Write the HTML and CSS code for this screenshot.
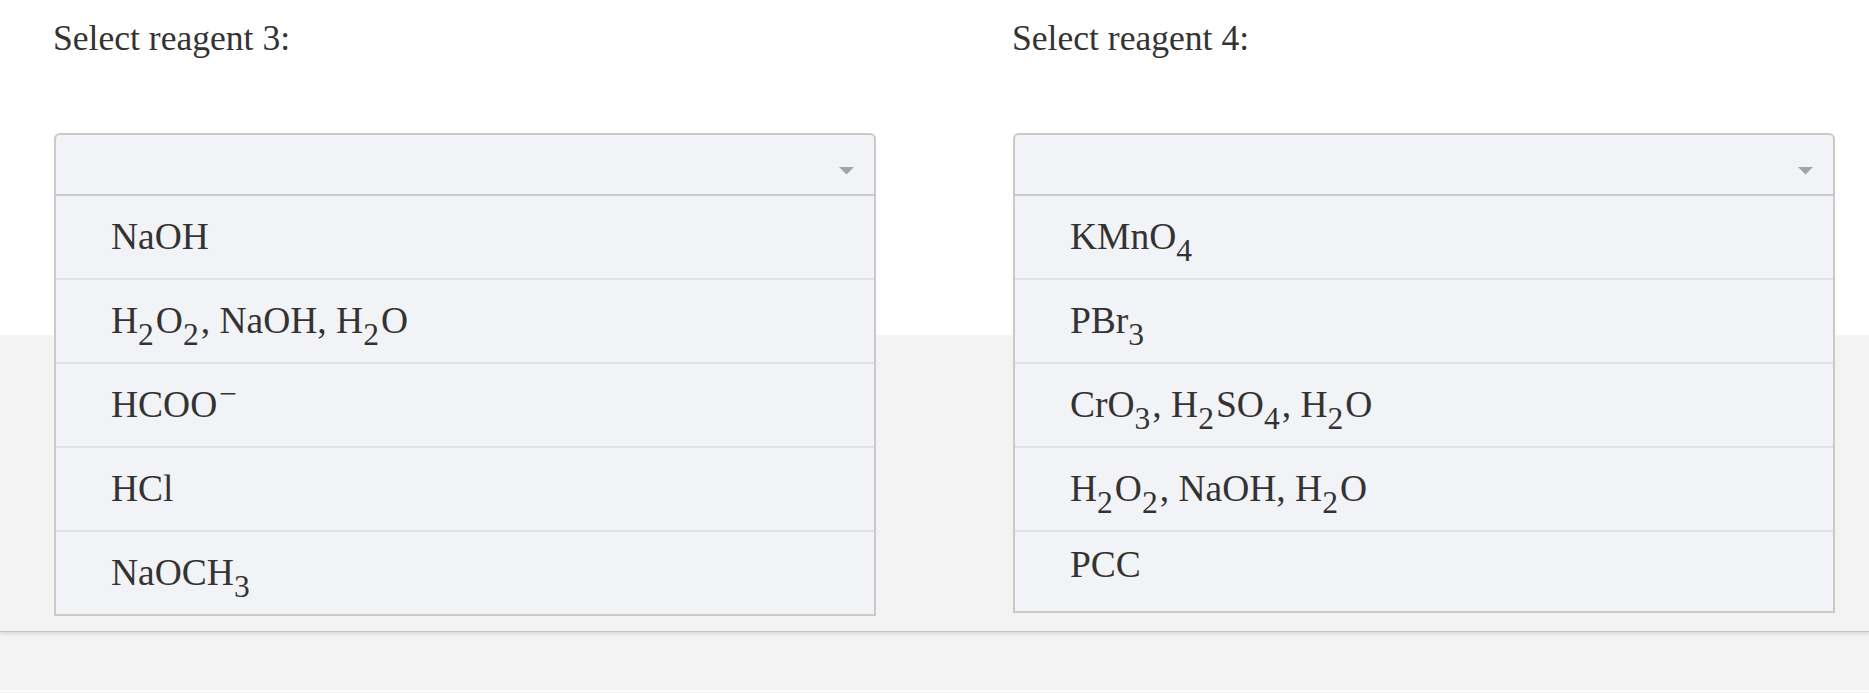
FILE: index.html
```html
<!DOCTYPE html>
<html lang="en">
<head>
<meta charset="utf-8">
<title>Select reagents</title>
<link rel="stylesheet" href="styles.css">
</head>
<body>
<div class="card">
  <div class="fields">
    <div class="field">
      <div class="label">Select reagent 3:</div>
      <div class="select">
        <div class="select-head">
          <svg class="caret" width="15" height="8" viewBox="0 0 15 8"><polygon points="0,0 15,0 7.5,7.5"/></svg>
        </div>
        <ul class="menu">
          <li class="opt">NaOH</li>
          <li class="opt">H<sub>2</sub>O<sub>2</sub>, NaOH, H<sub>2</sub>O</li>
          <li class="opt">HCOO<sup>−</sup></li>
          <li class="opt">HCl</li>
          <li class="opt">NaOCH<sub>3</sub></li>
        </ul>
      </div>
    </div>
    <div class="field">
      <div class="label">Select reagent 4:</div>
      <div class="select">
        <div class="select-head">
          <svg class="caret" width="15" height="8" viewBox="0 0 15 8"><polygon points="0,0 15,0 7.5,7.5"/></svg>
        </div>
        <ul class="menu">
          <li class="opt">KMnO<sub>4</sub></li>
          <li class="opt">PBr<sub>3</sub></li>
          <li class="opt">CrO<sub>3</sub>, H<sub>2</sub>SO<sub>4</sub>, H<sub>2</sub>O</li>
          <li class="opt">H<sub>2</sub>O<sub>2</sub>, NaOH, H<sub>2</sub>O</li>
          <li class="opt opt-short">PCC</li>
        </ul>
      </div>
    </div>
  </div>
</div>
<div class="gray-band"></div>
<div class="footer-band"></div>
<div class="edge"></div>
</body>
</html>
```

FILE: styles.css
```css
html, body {
  margin: 0;
  padding: 0;
}

body {
  background: #f3f3f3;
  font-family: "Liberation Serif", "Times New Roman", serif;
  color: #333333;
}

.card {
  background: #ffffff;
  height: 335px;
  box-sizing: border-box;
  padding: 18px 0 0 54px;
}

.fields {
  display: grid;
  grid-template-columns: 822px 822px;
  column-gap: 137px;
}

.field {
  display: flex;
  flex-direction: column;
}

.label {
  font-size: 35.6px;
  line-height: 40px;
  margin-left: -1px;
}

.select {
  position: relative;
  margin-top: 75px;
}

.select-head {
  height: 63px;
  box-sizing: border-box;
  background: #f2f3f7;
  border: 2px solid #c9c9c9;
  border-radius: 6px 6px 0 0;
  display: flex;
  justify-content: flex-end;
  align-items: flex-start;
  padding: 32px 20px 0 0;
}

.caret {
  display: block;
  fill: #a4a4a4;
}

.menu {
  position: absolute;
  top: 100%;
  left: 0;
  right: 0;
  z-index: 1;
  margin: 0;
  padding: 0;
  list-style: none;
  background: #f2f3f7;
  border: 2px solid #c9c9c9;
  border-top: 0;
}

.opt {
  height: 82px;
  box-sizing: border-box;
  padding: 22px 0 0 55px;
  font-size: 37.5px;
  line-height: 37.5px;
  white-space: nowrap;
}

.opt + .opt {
  border-top: 2px solid #e0e1e5;
  height: 84px;
}

.opt-short {
  padding-top: 14px;
}

.opt + .opt-short {
  height: 81px;
}

.opt sub {
  font-size: 0.84em;
  line-height: 0;
  vertical-align: -12px;
  margin-right: 2px;
}

.opt sup {
  font-size: 0.84em;
  line-height: 0;
  vertical-align: 13px;
  margin-left: 2px;
}

.gray-band {
  height: 296px;
  border-bottom: 1px solid #c4c4c4;
  box-shadow: 0 2px 3px rgba(0, 0, 0, 0.10);
}

.footer-band {
  height: 58px;
}

.edge {
  height: 2px;
  background: #fbfbfb;
}
```
